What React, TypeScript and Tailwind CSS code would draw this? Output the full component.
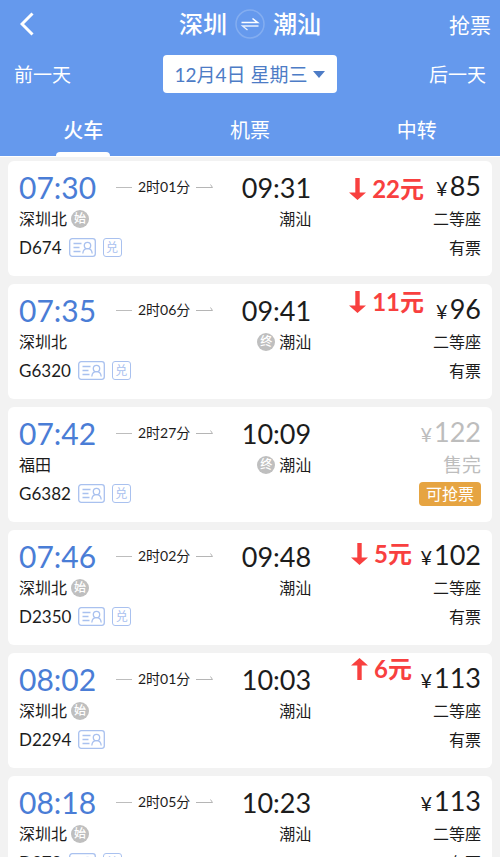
import { useState } from "react";
import clsx from "clsx";

interface PriceChange {
  direction: "up" | "down";
  amount: string;
  position: string;
}

interface Train {
  no: string;
  depart: string;
  arrive: string;
  duration: string;
  from: string;
  to: string;
  isOrigin?: boolean;
  isTerminus?: boolean;
  redeemable?: boolean;
  soldOut?: boolean;
  price: number;
  change?: PriceChange;
}

const tabs = ["火车", "机票", "中转"];

const trains: Train[] = [
  {
    no: "D674",
    depart: "07:30",
    arrive: "09:31",
    duration: "2时01分",
    from: "深圳北",
    to: "潮汕",
    isOrigin: true,
    redeemable: true,
    price: 85,
    change: { direction: "down", amount: "22元", position: "right-17 top-4" },
  },
  {
    no: "G6320",
    depart: "07:35",
    arrive: "09:41",
    duration: "2时06分",
    from: "深圳北",
    to: "潮汕",
    isTerminus: true,
    redeemable: true,
    price: 96,
    change: { direction: "down", amount: "11元", position: "right-17 top-1.5" },
  },
  {
    no: "G6382",
    depart: "07:42",
    arrive: "10:09",
    duration: "2时27分",
    from: "福田",
    to: "潮汕",
    isTerminus: true,
    redeemable: true,
    soldOut: true,
    price: 122,
  },
  {
    no: "D2350",
    depart: "07:46",
    arrive: "09:48",
    duration: "2时02分",
    from: "深圳北",
    to: "潮汕",
    isOrigin: true,
    redeemable: true,
    price: 102,
    change: { direction: "down", amount: "5元", position: "right-20 top-3" },
  },
  {
    no: "D2294",
    depart: "08:02",
    arrive: "10:03",
    duration: "2时01分",
    from: "深圳北",
    to: "潮汕",
    isOrigin: true,
    price: 113,
    change: { direction: "up", amount: "6元", position: "right-20 top-1" },
  },
  {
    no: "D378",
    depart: "08:18",
    arrive: "10:23",
    duration: "2时05分",
    from: "深圳北",
    to: "潮汕",
    isOrigin: true,
    redeemable: true,
    price: 113,
  },
];

const SwapIcon = () => (
  <svg viewBox="0 0 30 30" className="h-[30px] w-[30px]" fill="none" stroke="white">
    <circle cx="15" cy="15" r="14" strokeOpacity="0.2" strokeWidth="1.5" />
    <path d="M6.5 13.5h16l-5-4" strokeWidth="1.6" />
    <path d="M23.5 17h-16l5 4" strokeWidth="1.3" strokeOpacity="0.85" />
  </svg>
);

const IdCardIcon = () => (
  <svg viewBox="0 0 27 19" className="h-[19px] w-[27px]" fill="none" stroke="#a9c1ef" strokeWidth="1.3">
    <rect x="0.7" y="0.7" width="25.6" height="17.6" rx="2.5" />
    <path d="M4.5 5.500h8M4.5 9.500h6M4.5 13.500h7" />
    <circle cx="18.500" cy="7.500" r="3.200" />
    <path d="M13.800 15.500c.3-3 2-4.800 4.700-4.800s4.400 1.800 4.700 4.800" />
  </svg>
);

const ChangeArrow = ({ up }: { up: boolean }) => (
  <svg viewBox="0 0 17 22" className={clsx("h-[22px] w-[17px]", up && "rotate-180")} fill="currentColor">
    <path d="M6.300 0h4.400v14.500H17L8.500 22 0 14.500h6.300z" />
  </svg>
);

const StationBadge = ({ children }: { children: string }) => (
  <span className="flex h-[18px] w-[18px] items-center justify-center rounded-full bg-[#bfbfbf] text-xs leading-none font-medium text-white">
    {children}
  </span>
);

const Duration = ({ children }: { children: string }) => (
  <div className="flex items-center justify-center gap-1.5 whitespace-nowrap text-sm">
    <span className="h-px w-4 bg-[#bdbdbd]" />
    {children}
    <svg viewBox="0 0 17 7" className="h-[7px] w-[17px]" fill="none" stroke="#b5b5b5">
      <path d="M0 3.500h16.500l-2-3" />
    </svg>
  </div>
);

const TrainCard = ({ train }: { train: Train }) => (
  <li className="relative grid shrink-0 grid-cols-[97fr_97fr_98fr_170fr] grid-rows-[32px_31px_27px] items-center rounded-md bg-white px-[11px] pt-2.5 pb-[15px] text-base leading-none">
    <div className="text-[30px] text-[#4a7dd6]">{train.depart}</div>
    <Duration>{train.duration}</Duration>
    <div className="text-right text-[27px]">{train.arrive}</div>
    <div className={clsx("flex items-baseline justify-end gap-0.5 text-[27px]", train.soldOut && "text-[#bdbdbd]")}>
      <span className="text-xl">¥</span>
      {train.price}
    </div>

    <div className="col-span-2 flex items-center gap-1">
      {train.from}
      {train.isOrigin && <StationBadge>始</StationBadge>}
    </div>
    <div className="flex items-center justify-end gap-1">
      {train.isTerminus && <StationBadge>终</StationBadge>}
      {train.to}
    </div>
    <div className={clsx("text-right", train.soldOut && "text-[19px] text-[#bdbdbd]")}>
      {train.soldOut ? "售完" : "二等座"}
    </div>

    <div className="col-span-3 flex items-center gap-[7px]">
      <span className="text-[17px]">{train.no}</span>
      <IdCardIcon />
      {train.redeemable && (
        <span className="flex h-[19px] w-[19px] items-center justify-center rounded-[3px] border border-[#a9c1ef] text-xs text-[#a9c1ef]">
          兑
        </span>
      )}
    </div>
    <div className="flex justify-end">
      {train.soldOut ? (
        <button className="h-6 rounded bg-[#e6a441] px-[7px] text-white">可抢票</button>
      ) : (
        "有票"
      )}
    </div>

    {train.change && (
      <div className={clsx("absolute flex h-6 items-center gap-1.5 text-2xl leading-none font-bold text-[#f8403f]", train.change.position)}>
        <ChangeArrow up={train.change.direction === "up"} />
        {train.change.amount}
      </div>
    )}
  </li>
);

export default function App() {
  const [active, setActive] = useState(0);

  return (
    <div className="flex h-screen flex-col bg-[#f2f2f2] font-['Lato','Noto_Sans_CJK_SC',sans-serif] text-[#1c1c1c]">
      <header className="shrink-0 border-b border-white bg-[#6599ed] leading-none text-white">
        <div className="grid h-12 grid-cols-[1fr_auto_1fr] items-center px-[9px]">
          <button aria-label="返回" className="justify-self-start pl-[11px]">
            <svg viewBox="0 0 14 24" className="h-6 w-3.5" fill="none" stroke="white" strokeWidth="3">
              <path d="M12.500 1.500L2 12l10.500 10.500" />
            </svg>
          </button>
          <h1 className="flex items-center gap-2 text-2xl font-medium">
            深圳
            <SwapIcon />
            潮汕
          </h1>
          <button className="justify-self-end text-[21px]">抢票</button>
        </div>

        <div className="grid h-13 grid-cols-[1fr_auto_1fr] items-center px-3.5 text-[19px]">
          <button className="justify-self-start">前一天</button>
          <button className="flex h-[38px] items-center gap-1.5 rounded bg-white px-3 text-[#4d7cc6]">
            12月4日 星期三
            <svg viewBox="0 0 12 7" className="h-[7px] w-3" fill="currentColor">
              <path d="M0 0h12L6 7z" />
            </svg>
          </button>
          <button className="justify-self-end">后一天</button>
        </div>

        <div role="tablist" className="mt-1 grid h-13 grid-cols-3 text-xl">
          {tabs.map((tab, index) => (
            <button
              key={tab}
              role="tab"
              aria-selected={active === index}
              onClick={() => setActive(index)}
              className={clsx("relative", active === index && "font-medium")}
            >
              {tab}
              {active === index && (
                <span className="absolute bottom-0 left-1/2 h-1 w-[54px] -translate-x-1/2 rounded-t bg-white" />
              )}
            </button>
          ))}
        </div>
      </header>

      <ul className="flex min-h-0 flex-1 flex-col gap-2 overflow-y-auto px-2 pt-1 [scrollbar-width:none]">
        {trains.map((train) => (
          <TrainCard key={train.no} train={train} />
        ))}
      </ul>
    </div>
  );
}
